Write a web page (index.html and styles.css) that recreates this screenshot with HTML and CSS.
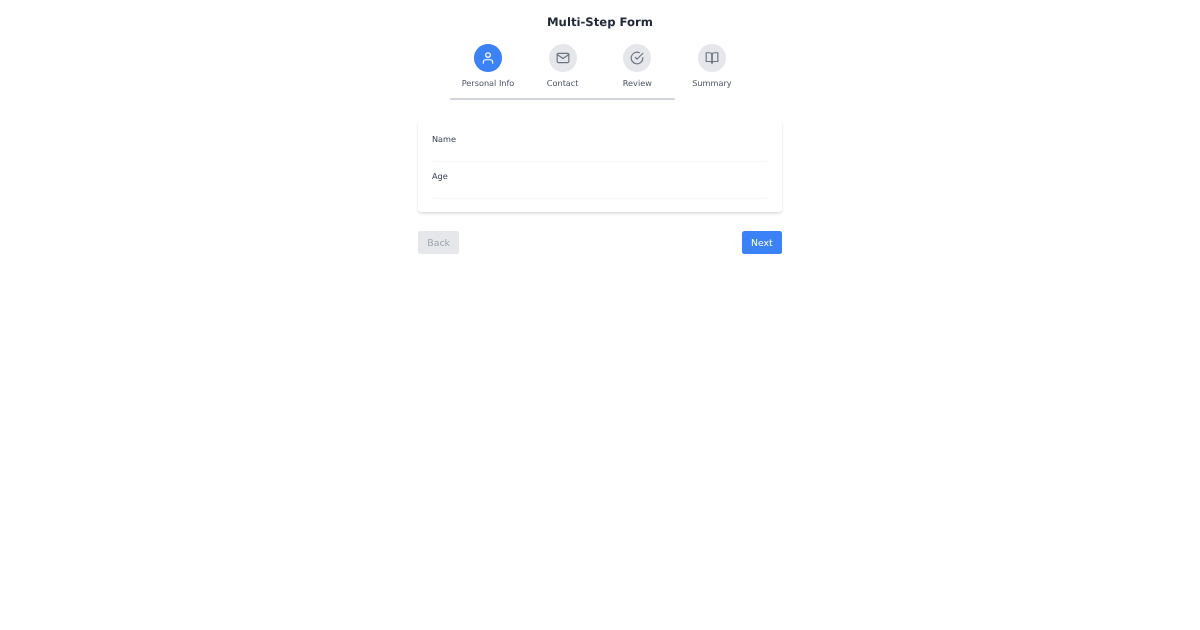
FILE: index.html
```html
<!DOCTYPE html>
<html>
<head>
<meta charset="utf-8">
<title>Multi-Step Form</title>
<link rel="stylesheet" href="styles.css">
</head>
<body>
<div class="wizard">
	<h1 class="title">Multi-Step Form</h1>
	<div class="stepper">
		<ul class="steps">
			<li class="step active">
				<span class="stepIcon">
					<svg viewBox="0 0 24 24"><path d="M20 21v-2a4 4 0 0 0-4-4H8a4 4 0 0 0-4 4v2"/><circle cx="12" cy="7" r="4"/></svg>
				</span>
				<span class="stepLabel">Personal Info</span>
			</li>
			<li class="step">
				<span class="stepIcon">
					<svg viewBox="0 0 24 24"><rect x="2" y="4" width="20" height="16" rx="2"/><path d="M22 6 12 13 2 6"/></svg>
				</span>
				<span class="stepLabel">Contact</span>
			</li>
			<li class="step">
				<span class="stepIcon">
					<svg viewBox="0 0 24 24"><path d="M22 11.08V12a10 10 0 1 1-5.93-9.14"/><path d="M22 4 12 14.01l-3-3"/></svg>
				</span>
				<span class="stepLabel">Review</span>
			</li>
			<li class="step">
				<span class="stepIcon">
					<svg viewBox="0 0 24 24"><path d="M2 3h6a4 4 0 0 1 4 4v14a3 3 0 0 0-3-3H2z"/><path d="M22 3h-6a4 4 0 0 0-4 4v14a3 3 0 0 1 3-3h7z"/></svg>
				</span>
				<span class="stepLabel">Summary</span>
			</li>
		</ul>
		<div class="progress"></div>
	</div>
	<form class="card">
		<div class="field">
			<label class="fieldLabel" for="name">Name</label>
			<input class="fieldInput" id="name" type="text" autocomplete="off">
		</div>
		<div class="field">
			<label class="fieldLabel" for="age">Age</label>
			<input class="fieldInput" id="age" type="text" autocomplete="off">
		</div>
	</form>
	<div class="actions">
		<button class="btn btnBack" type="button" disabled>Back</button>
		<button class="btn btnNext" type="button">Next</button>
	</div>
</div>
</body>
</html>
```

FILE: styles.css
```css
* {
    box-sizing: border-box;
}
body {
    margin: 0;
    background-color: #ffffff;
    font-family: "DejaVu Sans", sans-serif;
    text-rendering: geometricPrecision;
}
ul {
    list-style: none;
    margin: 0;
    padding: 0;
}
.wizard {
    width: 364px;
    margin: 0 auto;
    padding-top: 15px;
    will-change: transform;
}
.title {
    margin: 0 0 15px;
    font-size: 11.67px;
    line-height: 14px;
    font-weight: bold;
    text-align: center;
    color: #1f2937;
}
.stepper {
    width: 298.67px;
    margin: 0 auto 20px;
}
.steps {
    display: flex;
}
.step {
    width: 74.67px;
    display: flex;
    flex-direction: column;
    align-items: center;
}
.stepIcon {
    width: 28px;
    height: 28px;
    border-radius: 50%;
    display: flex;
    align-items: center;
    justify-content: center;
    background-color: #e5e7eb;
    color: #6b7280;
}
.stepIcon svg {
    width: 14px;
    height: 14px;
    fill: none;
    stroke: currentColor;
    stroke-width: 2;
    stroke-linecap: round;
    stroke-linejoin: round;
}
.step.active .stepIcon {
    background-color: #3b82f6;
    color: #ffffff;
}
.stepLabel {
    margin-top: 6px;
    font-size: 8.17px;
    line-height: 10px;
    white-space: nowrap;
    color: #4b5563;
}
.progress {
    width: 225px;
    height: 2.33px;
    margin-top: 9.67px;
    margin-left: -0.67px;
    border-radius: 1.2px;
    background-color: #d1d5db;
}
.card {
    padding: 14px;
    border-radius: 4px;
    background-color: #ffffff;
    box-shadow: 0 2.33px 3.5px -0.58px rgba(0, 0, 0, 0.1), 0 1.17px 2.33px -0.58px rgba(0, 0, 0, 0.06);
}
.field + .field {
    margin-top: 10px;
}
.fieldLabel {
    display: block;
    font-size: 8.17px;
    line-height: 10px;
    color: #374151;
}
.fieldInput {
    display: block;
    width: 100%;
    height: 17px;
    margin: 0;
    padding: 0 6px;
    border: 0;
    border-radius: 3px;
    outline: 0;
    background-color: #ffffff;
    box-shadow: 0 1px 1px rgba(0, 0, 0, 0.04);
}
.actions {
    display: flex;
    justify-content: space-between;
    margin-top: 19px;
}
.btn {
    height: 23px;
    padding: 0 9.33px;
    border: 0;
    border-radius: 2.5px;
    font-family: inherit;
    font-size: 9.33px;
    font-weight: normal;
}
.btnBack {
    background-color: #e5e7eb;
    color: #9ca3af;
}
.btnNext {
    background-color: #3b82f6;
    color: #ffffff;
}
```
